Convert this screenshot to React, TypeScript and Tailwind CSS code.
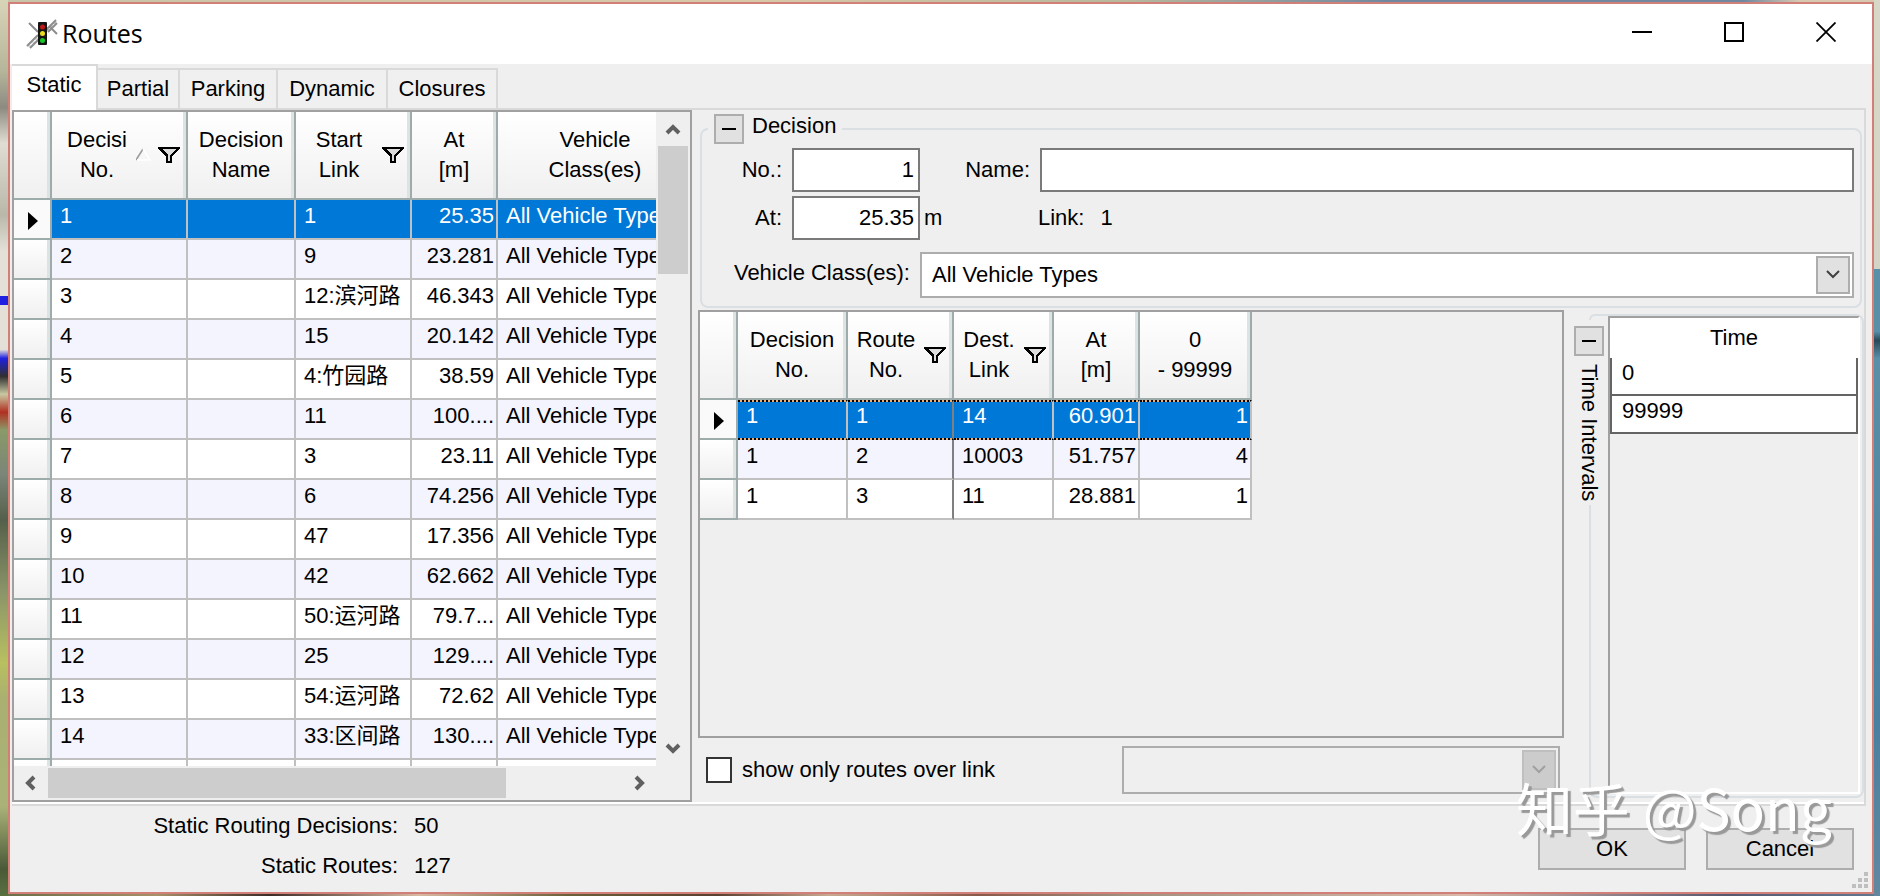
import { useState } from 'react';
import type { ReactNode } from 'react';
import clsx from 'clsx';

/* ── Data ────────────────────────────────────────────────── */

const TABS = [
  { name: 'Static', width: 'w-[86px]' },
  { name: 'Partial', width: 'w-[82px]' },
  { name: 'Parking', width: 'w-[98px]' },
  { name: 'Dynamic', width: 'w-[110px]' },
  { name: 'Closures', width: 'w-[110px]' },
];

const DECISIONS = [
  { no: '1', link: '1', at: '25.35' },
  { no: '2', link: '9', at: '23.281' },
  { no: '3', link: '12:滨河路', at: '46.343' },
  { no: '4', link: '15', at: '20.142' },
  { no: '5', link: '4:竹园路', at: '38.59' },
  { no: '6', link: '11', at: '100....' },
  { no: '7', link: '3', at: '23.11' },
  { no: '8', link: '6', at: '74.256' },
  { no: '9', link: '47', at: '17.356' },
  { no: '10', link: '42', at: '62.662' },
  { no: '11', link: '50:运河路', at: '79.7...' },
  { no: '12', link: '25', at: '129....' },
  { no: '13', link: '54:运河路', at: '72.62' },
  { no: '14', link: '33:区间路', at: '130....' },
];

const ROUTES = [
  { decision: '1', route: '1', dest: '14', at: '60.901', volume: '1' },
  { decision: '1', route: '2', dest: '10003', at: '51.757', volume: '4' },
  { decision: '1', route: '3', dest: '11', at: '28.881', volume: '1' },
];

/* ── Icons ───────────────────────────────────────────────── */

function RoutesIcon() {
  return (
    <svg width="32" height="30" viewBox="0 0 32 30" fill="none" aria-hidden="true">
      <path d="M3 4l9 9M24 8l7 7M1 27L12 16M4 29l9-9M20 11L30 1M22 13l9-9" stroke="#8c8c8c" strokeWidth="2" />
      <path d="M2.500 28L13 17.500M21 12L31 2" stroke="#b5b5b5" strokeDasharray="3 2" />
      <rect x="12" y="3" width="9" height="23" rx="1" fill="#141414" />
      <circle cx="16.500" cy="8" r="2.500" fill="#c01818" />
      <circle cx="16.500" cy="14.500" r="2.500" fill="#e8dc20" />
      <circle cx="16.500" cy="21.500" r="2.500" fill="#18c828" />
    </svg>
  );
}

function FilterIcon() {
  return (
    <svg className="mr-1.5 shrink-0" width="22" height="16" viewBox="0 0 22 16" shapeRendering="crispEdges" aria-hidden="true">
      <path d="M0 0h22v2l-8 7v7h-6V9L0 2z" fill="#000" />
      <path d="M4 2h14l-6 6v6h-2V8z" fill="#dcdcdc" />
    </svg>
  );
}

function SortIcon() {
  return (
    <svg className="w-4 shrink-0" width="16" height="14" viewBox="0 0 16 14" fill="none" aria-hidden="true">
      <path d="M0 12L7 1" stroke="#9a9a9a" strokeWidth="1.500" />
      <path d="M7 1l7 11H1" stroke="#fff" strokeWidth="1.500" />
    </svg>
  );
}

const CHEVRONS = {
  up: 'M2 12l6-6 6 6',
  down: 'M2 4l6 6 6-6',
  left: 'M11 2L5 8l6 6',
  right: 'M5 2l6 6-6 6',
};

function Chevron({ dir, thin }: { dir: keyof typeof CHEVRONS; thin?: boolean }) {
  return (
    <svg width="16" height="16" viewBox="0 0 16 16" fill="none" aria-hidden="true">
      <path d={CHEVRONS[dir]} stroke="currentColor" strokeWidth={thin ? 2 : 4} />
    </svg>
  );
}

/* ── Grid pieces ─────────────────────────────────────────── */

const bevel =
  'border-r-2 border-b-2 border-[#9dabab] bg-linear-to-b from-white to-[#f0f0f0] shadow-[inset_-3px_0_0_#dde3e3]';

function HeadCell({ lines, sorted, filter }: { lines: string[]; sorted?: boolean; filter?: boolean }) {
  return (
    <th className={clsx('h-[88px] p-0 font-normal', bevel)}>
      <div className={clsx('flex items-center', sorted && 'pl-1.5')}>
        <div className="flex-1 text-center leading-[30px] whitespace-nowrap">
          {lines.map((l) => (
            <div key={l}>{l}</div>
          ))}
        </div>
        {sorted && <SortIcon />}
        {sorted && <span className="w-1.5" />}
        {filter && <FilterIcon />}
      </div>
    </th>
  );
}

function RowHead({ current }: { current?: boolean }) {
  return (
    <th className={clsx('h-10 p-0', current ? 'border-r-2 border-b-2 border-[#9dabab] bg-[#fafafa]' : bevel)}>
      {current && (
        <svg className="ml-3.5 mt-1" width="10" height="18" viewBox="0 0 10 18" aria-hidden="true">
          <path d="M0 0l10 9-10 9z" fill="#000" />
        </svg>
      )}
    </th>
  );
}

function Cell({ children, right, dark, focused }: { children?: ReactNode; right?: boolean; dark?: boolean; focused?: boolean }) {
  return (
    <td
      className={clsx(
        'h-10 border-r-2 whitespace-nowrap leading-7',
        right ? 'pr-0.5 text-right' : 'pl-2',
        dark ? 'border-r-[#808080]' : 'border-r-[#c0c0c0]',
        focused
          ? 'border-t-2 border-b-2 border-t-black border-b-black bg-[#0078d7] bg-clip-padding pt-0 pb-2 [border-bottom-style:dotted] [border-top-style:dotted]'
          : 'border-b-2 border-b-[#c0c0c0] pt-0 pb-1.5'
      )}
    >
      {children}
    </td>
  );
}

function CollapseButton({ label }: { label: string }) {
  return (
    <button
      aria-label={label}
      className="flex h-[30px] w-[30px] shrink-0 items-center justify-center border-2 border-[#adadad] bg-[#e1e1e1]"
    >
      <span className="h-0.5 w-3.5 bg-black" />
    </button>
  );
}

/* ── Left: decisions list ────────────────────────────────── */

function DecisionList({ selected, onSelect }: { selected: string; onSelect: (no: string) => void }) {
  return (
    <div className="flex w-[680px] shrink-0 flex-col border-2 border-[#a0a0a0] bg-[#efefef]">
      <div className="flex min-h-0 flex-1">
        <div className="h-0 min-h-full w-[642px] overflow-hidden bg-white">
          <table className="w-[680px] table-fixed border-separate border-spacing-0">
            <colgroup>
              <col className="w-[38px]" />
              <col className="w-[136px]" />
              <col className="w-[108px]" />
              <col className="w-[116px]" />
              <col className="w-[86px]" />
              <col className="w-[196px]" />
            </colgroup>
            <thead>
              <tr>
                <th className={bevel} />
                <HeadCell lines={['Decisi', 'No.']} sorted filter />
                <HeadCell lines={['Decision', 'Name']} />
                <HeadCell lines={['Start', 'Link']} filter />
                <HeadCell lines={['At', '[m]']} />
                <HeadCell lines={['Vehicle', 'Class(es)']} />
              </tr>
            </thead>
            <tbody>
              {DECISIONS.map((d, i) => (
                <tr
                  key={d.no}
                  onClick={() => onSelect(d.no)}
                  className={d.no === selected ? 'bg-[#0078d7] text-white' : i % 2 ? 'bg-[#f4f4fe]' : 'bg-white'}
                >
                  <RowHead current={d.no === selected} />
                  <Cell>{d.no}</Cell>
                  <Cell />
                  <Cell>{d.link}</Cell>
                  <Cell right>{d.at}</Cell>
                  <Cell>All Vehicle Types</Cell>
                </tr>
              ))}
              <tr>
                <RowHead />
                <Cell />
                <Cell />
                <Cell />
                <Cell />
                <Cell />
              </tr>
            </tbody>
          </table>
        </div>
        <div className="flex flex-1 flex-col pr-0.5 pl-0.5 text-[#606060]">
          <button aria-label="Scroll up" className="flex h-[34px] items-center justify-center">
            <Chevron dir="up" />
          </button>
          <div className="flex-1">
            <div className="h-32 bg-[#cdcdcd]" />
          </div>
          <button aria-label="Scroll down" className="flex h-[34px] items-center justify-center">
            <Chevron dir="down" />
          </button>
        </div>
      </div>
      <div className="mt-0.5 flex h-[32px] pr-[34px] pb-0.5 text-[#606060]">
        <button aria-label="Scroll left" className="flex w-[34px] items-center justify-center">
          <Chevron dir="left" />
        </button>
        <div className="flex-1">
          <div className="h-full w-[458px] bg-[#cdcdcd]" />
        </div>
        <button aria-label="Scroll right" className="flex w-[34px] items-center justify-center">
          <Chevron dir="right" />
        </button>
      </div>
    </div>
  );
}

/* ── Right: details ──────────────────────────────────────── */

const inputClass = 'h-11 border-2 border-[#7a7a7a] bg-white outline-none';

function DecisionForm() {
  return (
    <fieldset className="mx-0.5 mb-0.5 rounded-lg border-2 border-[#dadfe3] px-1.5 pb-2">
      <legend className="flex items-center gap-2 bg-[#efefef] px-1.5">
        <CollapseButton label="Collapse decision" />
        <span className="pb-1.5 leading-6">Decision</span>
      </legend>
      <div className="mt-1 flex items-center gap-2.5">
        <label htmlFor="no" className="w-[74px] text-right">No.:</label>
        <input id="no" defaultValue="1" className={clsx(inputClass, 'w-32 pr-1 text-right')} />
        <label htmlFor="name" className="w-[100px] text-right">Name:</label>
        <input id="name" className={clsx(inputClass, 'min-w-0 flex-1 px-2')} />
      </div>
      <div className="mt-1 flex items-center gap-2.5">
        <label htmlFor="at" className="w-[74px] text-right">At:</label>
        <div className="flex w-[236px] items-center gap-1">
          <input id="at" defaultValue="25.35" className={clsx(inputClass, 'w-32 pr-1 text-right')} />
          <span>m</span>
        </div>
        <span>Link:</span>
        <span className="pl-1.5">1</span>
      </div>
      <div className="mt-3 flex items-center gap-2.5">
        <label htmlFor="classes" className="w-[202px] pb-1 text-right">Vehicle Class(es):</label>
        <div className="relative flex-1">
          <select id="classes" className="h-[46px] w-full appearance-none border-2 border-[#adadad] bg-white pl-2.5 outline-none">
            <option>All Vehicle Types</option>
          </select>
          <span className="pointer-events-none absolute inset-y-1 right-1 flex w-[34px] items-center justify-center border-2 border-[#adadad] bg-[#e1e1e1] text-[#404040]">
            <Chevron dir="down" thin />
          </span>
        </div>
      </div>
    </fieldset>
  );
}

function RouteGrid() {
  return (
    <div className="flex-1 border-2 border-[#a0a0a0]">
      <table className="w-[552px] table-fixed border-separate border-spacing-0">
        <colgroup>
          <col className="w-[38px]" />
          <col className="w-[110px]" />
          <col className="w-[106px]" />
          <col className="w-[100px]" />
          <col className="w-[86px]" />
          <col className="w-[112px]" />
        </colgroup>
        <thead>
          <tr>
            <th className={bevel} />
            <HeadCell lines={['Decision', 'No.']} />
            <HeadCell lines={['Route', 'No.']} filter />
            <HeadCell lines={['Dest.', 'Link']} filter />
            <HeadCell lines={['At', '[m]']} />
            <HeadCell lines={['0', '- 99999']} />
          </tr>
        </thead>
        <tbody>
          {ROUTES.map((r, i) => (
            <tr key={r.route} className={i === 0 ? 'bg-[#f0b070] text-white' : i % 2 ? 'bg-[#f4f4fe]' : 'bg-white'}>
              <RowHead current={i === 0} />
              <Cell focused={i === 0}>{r.decision}</Cell>
              <Cell focused={i === 0} dark>{r.route}</Cell>
              <Cell focused={i === 0}>{r.dest}</Cell>
              <Cell focused={i === 0} right>{r.at}</Cell>
              <Cell focused={i === 0} right>{r.volume}</Cell>
            </tr>
          ))}
        </tbody>
      </table>
    </div>
  );
}

function TimeIntervals() {
  return (
    <section className="flex w-[290px] pt-1 pb-1">
      <div className="flex w-[30px] flex-col">
        <div className="h-1.5 w-1/2 self-end rounded-tl-lg border-t-2 border-l-2 border-[#dadfe3]" />
        <div className="mt-1.5">
          <CollapseButton label="Collapse time intervals" />
        </div>
        <span className="mt-2 self-center leading-[30px] whitespace-nowrap [writing-mode:vertical-rl]">Time Intervals</span>
        <div className="mt-1 w-1/2 flex-1 self-end rounded-bl-lg border-b-2 border-l-2 border-[#dadfe3]" />
      </div>
      <div className="flex flex-1 flex-col rounded-r-lg border-y-2 border-r-2 border-[#dadfe3] pr-0.5 pb-0.5 pl-1">
        <div className="flex-1 border-2 border-t-[#a0a0a0] border-r-white border-b-white border-l-[#a0a0a0]">
          <table className="w-full border-separate border-spacing-0 bg-white">
            <thead>
              <tr>
                <th className="h-10 p-0 font-normal">Time</th>
              </tr>
            </thead>
            <tbody>
              {['0', '99999'].map((t) => (
                <tr key={t}>
                  <td className="h-[38px] border-x-2 border-b-2 border-[#646464] pt-0 pb-1.5 pl-2.5 leading-7">{t}</td>
                </tr>
              ))}
            </tbody>
          </table>
        </div>
      </div>
    </section>
  );
}

/* ── Window ──────────────────────────────────────────────── */

export default function App() {
  const [tab, setTab] = useState('Static');
  const [selected, setSelected] = useState('1');

  return (
    <div className="flex h-screen min-h-[760px] bg-[#c9b9a2] text-[22px] leading-7 text-black [font-family:'Liberation_Sans',Arial,'Noto_Sans_CJK_SC',sans-serif]">
      <div className="w-2 shrink-0 bg-[linear-gradient(#d8d4b8_0%,#b5b59a_8%,#8d8a80_12%,#e0ddd2_16%,#b9b8a8_24%,#e4e0d8_28%,#e4e0d8_33%,#2020e0_33%,#2020e0_34%,#e4e0d8_34%,#e4e0d8_39%,#2020e0_40%,#303030_42%,#c8c8a0_44%,#b03020_46%,#8a9a68_48%,#7b8578_53%,#55604a_58%,#8a9468_66%,#b8c060_74%,#a9b070_78%,#aab277_90%,#4a5a38_97%,#5a7040_100%)]" />

      <main className="flex min-w-0 flex-1 flex-col">
        <div className="h-0.5 shrink-0 bg-[linear-gradient(90deg,#c8c4a8_0%,#d8c8a8_40%,#b8b89c_60%,#7088a0_74%,#7088a0_93%,#d8c8b0_96%)]" />
        <div className="relative flex min-h-0 flex-1 flex-col border-2 border-[#d08078] bg-[#efefef]">
          {/* Title bar */}
          <header className="flex h-[60px] shrink-0 items-center bg-white pl-4">
            <RoutesIcon />
            <h1 className="ml-1 flex-1 pb-0.5 text-[25px] [font-family:'Open_Sans','Noto_Sans',sans-serif]">Routes</h1>
            <div className="flex pb-1">
              <button aria-label="Minimize" className="flex h-12 w-[92px] items-center justify-center">
                <span className="h-0.5 w-5 bg-black" />
              </button>
              <button aria-label="Maximize" className="flex h-12 w-[92px] items-center justify-center">
                <span className="size-5 border-2 border-black" />
              </button>
              <button aria-label="Close" className="flex h-12 w-[92px] items-center justify-center">
                <svg width="20" height="20" viewBox="0 0 20 20" aria-hidden="true">
                  <path d="M0.500 0.500l19 19M19.500 0.500l-19 19" stroke="#000" strokeWidth="1.800" />
                </svg>
              </button>
            </div>
          </header>

          <div className="flex min-h-0 flex-1 flex-col border-x-2 border-[#f5ebe9]">
            {/* Tabs */}
            <nav role="tablist" className="flex h-11 shrink-0 items-end">
              {TABS.map((t) => (
                <button
                  key={t.name}
                  role="tab"
                  aria-selected={tab === t.name}
                  onClick={() => setTab(t.name)}
                  className={clsx(
                    'shrink-0 border-t-2 border-r-2 border-[#d9d9d9]',
                    t.width,
                    tab === t.name ? 'z-10 -mb-0.5 h-[46px] bg-white pb-1.5' : 'h-10 bg-[#f0f0f0]'
                  )}
                >
                  {t.name}
                </button>
              ))}
            </nav>

            {/* Page */}
            <div className="mr-1 flex min-h-0 flex-1 flex-col border-t-2 border-r-2 border-b-2 border-[#d9d9d9]">
              <div className="flex min-h-0 flex-1 border-b-2 border-white">
                <DecisionList selected={selected} onSelect={setSelected} />
                <div className="ml-1.5 flex min-w-0 flex-1 flex-col pt-1">
                  <DecisionForm />
                  <div className="flex min-h-0 flex-1 gap-2.5">
                    <div className="flex min-w-0 flex-1 flex-col">
                      <RouteGrid />
                      <div className="flex items-center py-2 pl-2">
                        <input
                          id="overLink"
                          type="checkbox"
                          className="size-[26px] appearance-none border-2 border-[#333] bg-white checked:bg-[#0078d7]"
                        />
                        <label htmlFor="overLink" className="ml-2.5">show only routes over link</label>
                        <div className="relative mr-1 ml-auto w-[438px]">
                          <select
                            disabled
                            aria-label="Link"
                            className="h-12 w-full appearance-none border-2 border-[#adadad] bg-[#efefef]"
                          />
                          <span className="pointer-events-none absolute inset-y-1 right-1 flex w-[34px] items-center justify-center border-2 border-[#bfbfbf] bg-[#cccccc] text-[#a0a0a0]">
                            <Chevron dir="down" thin />
                          </span>
                        </div>
                      </div>
                    </div>
                    <TimeIntervals />
                  </div>
                </div>
              </div>
            </div>

            {/* Totals and buttons */}
            <footer className="flex shrink-0 justify-between pb-1.5">
              <dl className="grid grid-cols-[386px_auto] gap-x-4 leading-10">
                <dt className="text-right">Static Routing Decisions:</dt>
                <dd>50</dd>
                <dt className="text-right">Static Routes:</dt>
                <dd>127</dd>
              </dl>
              <div className="flex gap-5 pt-[22px] pr-4">
                <button className="h-[42px] w-[148px] border-2 border-[#adadad] bg-[#e1e1e1]">OK</button>
                <button className="h-[42px] w-[148px] border-2 border-[#adadad] bg-[#e1e1e1]">Cancel</button>
              </div>
            </footer>
          </div>

          {/* Resize grip */}
          <svg className="absolute right-1 bottom-1" width="16" height="16" viewBox="0 0 16 16" fill="#bfbfbf" aria-hidden="true">
            <path d="M12 0h4v4h-4zM6 6h4v4H6zM12 6h4v4h-4zM0 12h4v4H0zM6 12h4v4H6zM12 12h4v4h-4z" />
          </svg>

          {/* Watermark */}
          <div className="pointer-events-none absolute right-10 bottom-[50px] text-[57px] leading-[72px] whitespace-nowrap text-white [font-family:'Noto_Sans_CJK_SC',sans-serif] [text-shadow:3px_3px_1px_#999]">
            知乎 @Song
          </div>
        </div>
        <div className="h-0.5 shrink-0 bg-[linear-gradient(90deg,#6a7048_0%,#a89068_8%,#3c2c28_14%,#d8b8a0_22%,#6a6038_30%,#5a4030_38%,#c8a890_44%,#8a5848_52%,#a09080_60%,#d8b8a8_78%,#585870_92%,#607890_100%)]" />
      </main>

      <div className="w-1.5 shrink-0 bg-[linear-gradient(#d8d8c8_0%,#d4d4c6_30%,#5890a8_30%,#5890a8_37%,#284858_38%,#5890a8_40%,#4880a0_80%,#6088a0_100%)]" />
    </div>
  );
}
